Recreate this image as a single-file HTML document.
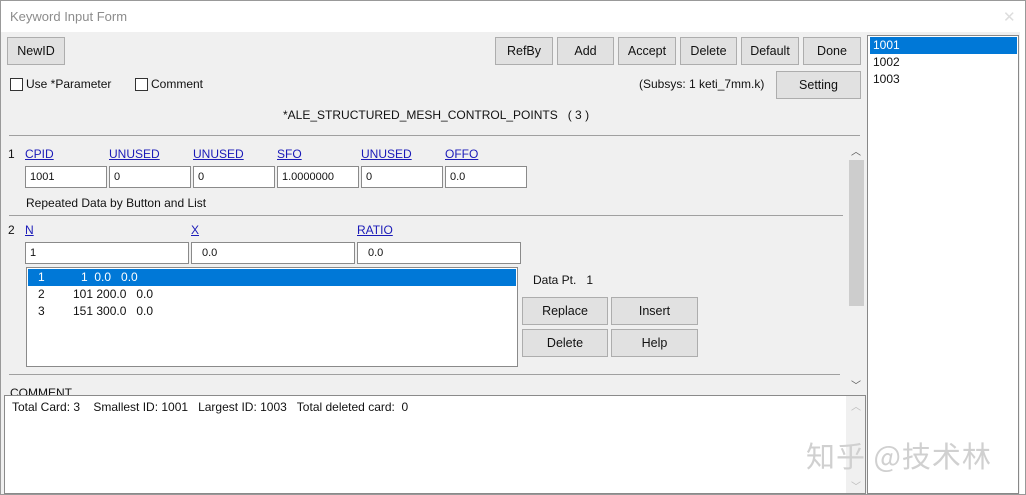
<!DOCTYPE html>
<html><head><meta charset="utf-8"><style>
*{box-sizing:border-box;margin:0;padding:0}
body{width:1026px;height:495px;overflow:hidden;background:#fff;font-family:"Liberation Sans","Noto Sans CJK SC",sans-serif;font-size:12px;color:#111;position:relative}
.a{position:absolute;white-space:nowrap}
.btn{position:absolute;background:#e1e1e1;border:1px solid #adadad;text-align:center;font-size:12.5px;color:#111}
.inp{position:absolute;background:#fff;border:1px solid #8a8a8a;font-size:11px;padding:4px 0 0 4px;height:22px}
.lnk{position:absolute;color:#1a1ab8;text-decoration:underline;font-size:12px}
.cb{position:absolute;width:13px;height:13px;border:1px solid #333;background:#fff}
.hl{position:absolute;height:1px;background:#a0a0a0}
</style></head><body>
<div class="a" style="left:0;top:0;width:1026px;height:495px;border:1px solid #999"></div>
<div class="a" style="left:10px;top:9px;color:#8c8c8c;font-size:13px">Keyword Input Form</div>
<div class="a" style="left:1003px;top:8px;color:#ddd;font-size:15px">✕</div>
<div class="a" style="left:1px;top:32px;width:866px;height:462px;background:#f0f0f0"></div>
<div class="a" style="left:867px;top:32px;width:153px;height:462px;background:#f0f0f0"></div>

<div class="btn" style="left:7px;top:37px;width:58px;height:28px;line-height:26px">NewID</div>
<div class="btn" style="left:495px;top:37px;width:58px;height:28px;line-height:26px">RefBy</div>
<div class="btn" style="left:557px;top:37px;width:57px;height:28px;line-height:26px">Add</div>
<div class="btn" style="left:618px;top:37px;width:58px;height:28px;line-height:26px">Accept</div>
<div class="btn" style="left:680px;top:37px;width:57px;height:28px;line-height:26px">Delete</div>
<div class="btn" style="left:741px;top:37px;width:58px;height:28px;line-height:26px">Default</div>
<div class="btn" style="left:803px;top:37px;width:58px;height:28px;line-height:26px">Done</div>

<div class="cb" style="left:10px;top:78px"></div><div class="a" style="left:26px;top:77px">Use *Parameter</div>
<div class="cb" style="left:135px;top:78px"></div><div class="a" style="left:151px;top:77px">Comment</div>
<div class="a" style="left:639px;top:77px">(Subsys: 1 keti_7mm.k)</div>
<div class="btn" style="left:776px;top:71px;width:85px;height:28px;line-height:26px">Setting</div>
<div class="a" style="left:283px;top:108px">*ALE_STRUCTURED_MESH_CONTROL_POINTS &nbsp;&nbsp;( 3 )</div>
<div class="hl" style="left:9px;top:135px;width:851px"></div>

<div class="a" style="left:848px;top:143px;width:17px;height:250px;background:#f0f0f0"></div>
<div class="a" style="left:849px;top:160px;width:15px;height:146px;background:#cdcdcd"></div>
<div class="a" style="left:851px;top:143px;font-size:10px;color:#555">︿</div>
<div class="a" style="left:851px;top:377px;font-size:10px;color:#555">﹀</div>

<div class="a" style="left:8px;top:147px">1</div>
<div class="lnk" style="left:25px;top:147px">CPID</div>
<div class="lnk" style="left:109px;top:147px">UNUSED</div>
<div class="lnk" style="left:193px;top:147px">UNUSED</div>
<div class="lnk" style="left:277px;top:147px">SFO</div>
<div class="lnk" style="left:361px;top:147px">UNUSED</div>
<div class="lnk" style="left:445px;top:147px">OFFO</div>
<div class="inp" style="left:25px;top:166px;width:82px">1001</div>
<div class="inp" style="left:109px;top:166px;width:82px">0</div>
<div class="inp" style="left:193px;top:166px;width:82px">0</div>
<div class="inp" style="left:277px;top:166px;width:82px">1.0000000</div>
<div class="inp" style="left:361px;top:166px;width:82px">0</div>
<div class="inp" style="left:445px;top:166px;width:82px">0.0</div>
<div class="a" style="left:26px;top:196px">Repeated Data by Button and List</div>
<div class="hl" style="left:9px;top:215px;width:834px"></div>

<div class="a" style="left:8px;top:223px">2</div>
<div class="lnk" style="left:25px;top:223px">N</div>
<div class="lnk" style="left:191px;top:223px">X</div>
<div class="lnk" style="left:357px;top:223px">RATIO</div>
<div class="inp" style="left:25px;top:242px;width:164px">1</div>
<div class="inp" style="left:191px;top:242px;width:164px;padding-left:10px">0.0</div>
<div class="inp" style="left:357px;top:242px;width:164px;padding-left:10px">0.0</div>

<div class="a" style="left:26px;top:267px;width:492px;height:100px;background:#fff;border:1px solid #8a8a8a"></div>
<div class="a" style="left:28px;top:269px;width:488px;height:17px;background:#0078d7"></div>
<div class="a" style="left:38px;top:270px;color:#fff">1</div><div class="a" style="left:81px;top:270px;color:#fff">1 &nbsp;0.0 &nbsp;&nbsp;0.0</div>
<div class="a" style="left:38px;top:287px">2</div><div class="a" style="left:73px;top:287px">101 200.0 &nbsp;&nbsp;0.0</div>
<div class="a" style="left:38px;top:304px">3</div><div class="a" style="left:73px;top:304px">151 300.0 &nbsp;&nbsp;0.0</div>

<div class="a" style="left:533px;top:273px">Data Pt. &nbsp;&nbsp;1</div>
<div class="btn" style="left:522px;top:297px;width:86px;height:28px;line-height:26px">Replace</div>
<div class="btn" style="left:611px;top:297px;width:87px;height:28px;line-height:26px">Insert</div>
<div class="btn" style="left:522px;top:329px;width:86px;height:28px;line-height:26px">Delete</div>
<div class="btn" style="left:611px;top:329px;width:87px;height:28px;line-height:26px">Help</div>
<div class="hl" style="left:9px;top:374px;width:831px"></div>
<div class="a" style="left:10px;top:386px;height:9px;overflow:hidden;font-size:12px">COMMENT</div>

<div class="a" style="left:4px;top:395px;width:862px;height:99px;background:#fff;border:1px solid #8a8a8a"></div>
<div class="a" style="left:12px;top:400px">Total Card: 3 &nbsp;&nbsp;&nbsp;Smallest ID: 1001 &nbsp;&nbsp;Largest ID: 1003 &nbsp;&nbsp;Total deleted card: &nbsp;0</div>
<div class="a" style="left:846px;top:396px;width:19px;height:97px;background:#f0f0f0"></div>
<div class="a" style="left:851px;top:398px;font-size:10px;color:#bbb">︿</div>
<div class="a" style="left:851px;top:478px;font-size:10px;color:#bbb">﹀</div>

<div class="a" style="left:867px;top:35px;width:152px;height:459px;background:#fff;border:1px solid #888"></div>
<div class="a" style="left:1020px;top:32px;width:5px;height:462px;background:#fff"></div>
<div class="a" style="left:870px;top:37px;width:147px;height:17px;background:#0078d7"></div>
<div class="a" style="left:873px;top:38px;color:#fff">1001</div>
<div class="a" style="left:873px;top:55px">1002</div>
<div class="a" style="left:873px;top:72px">1003</div>

<div class="a" style="left:806px;top:434px;font-size:29px;letter-spacing:1px;color:#d0d0d0;font-family:'Noto Sans CJK SC',sans-serif">知乎 @技术林</div>
</body></html>
